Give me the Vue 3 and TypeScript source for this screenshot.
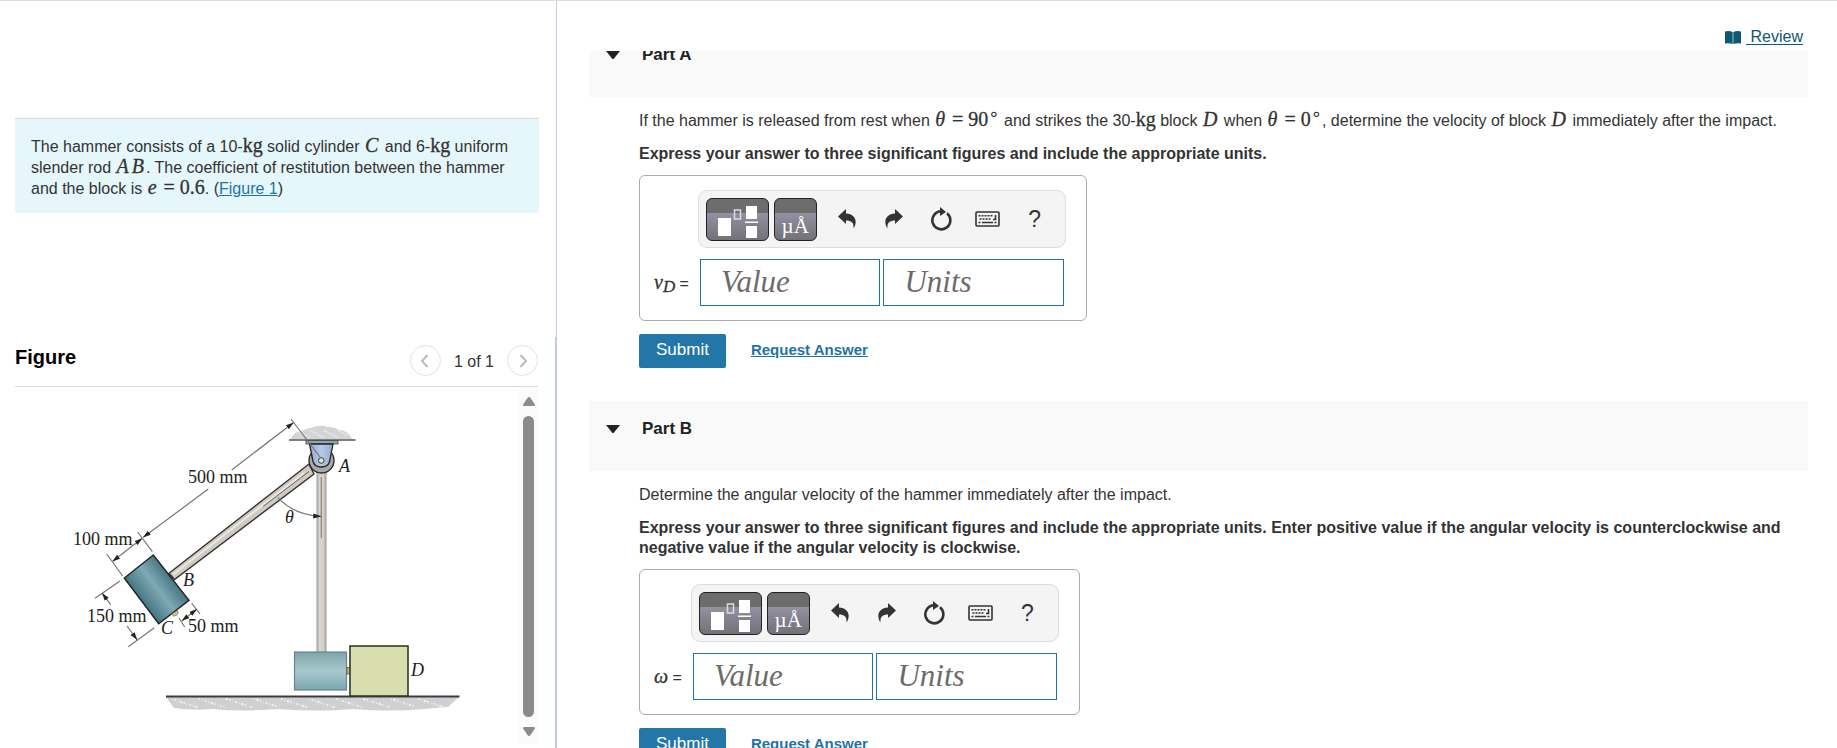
<script setup lang="ts">
import { ref } from 'vue'

type Kind = 'text' | 'rm' | 'it' | 'op' | 'deg'
interface Segment { t: string; k: Kind }
interface Part {
  id: string
  title: string
  question: Segment[]
  instruction: string
  symbol: string
  sub: string
}

const seg = (t: string, k: Kind = 'text'): Segment => ({ t, k })

const intro: Segment[] = [
  seg('The hammer consists of a 10-'), seg('kg', 'rm'), seg(' solid cylinder '), seg('C', 'it'),
  seg(' and 6-'), seg('kg', 'rm'), seg(' uniform slender rod '), seg('A', 'it'), seg('B', 'it'),
  seg('. The coefficient of restitution between the hammer and the block is '),
  seg('e', 'it'), seg('=', 'op'), seg('0.6', 'rm'), seg('. ('),
]

const parts: Part[] = [
  {
    id: 'a',
    title: 'Part A',
    question: [
      seg('If the hammer is released from rest when '), seg('θ', 'it'), seg('=', 'op'), seg('90', 'rm'), seg('∘', 'deg'),
      seg(' and strikes the 30-'), seg('kg', 'rm'), seg(' block '), seg('D', 'it'), seg(' when '),
      seg('θ', 'it'), seg('=', 'op'), seg('0', 'rm'), seg('∘', 'deg'),
      seg(', determine the velocity of block '), seg('D', 'it'), seg(' immediately after the impact.'),
    ],
    instruction: 'Express your answer to three significant figures and include the appropriate units.',
    symbol: 'v',
    sub: 'D',
  },
  {
    id: 'b',
    title: 'Part B',
    question: [seg('Determine the angular velocity of the hammer immediately after the impact.')],
    instruction: 'Express your answer to three significant figures and include the appropriate units. Enter positive value if the angular velocity is counterclockwise and negative value if the angular velocity is clockwise.',
    symbol: 'ω',
    sub: '',
  },
]

const open = ref<Record<string, boolean>>({ a: true, b: true })

const groundDots = Array.from({ length: 90 }, (_, i) => ({
  x: 172 + i * 3.05,
  y: 699 + ((i * 37) % 9),
  r: 0.6 + ((i * 13) % 5) * 0.15,
}))
const ceilingDots = Array.from({ length: 26 }, (_, i) => ({
  x: 297 + i * 2,
  y: 431 + ((i * 29) % 7),
}))
</script>

<template>
  <div class="page">
    <aside class="side">
      <section class="intro">
        <p><span v-for="(s, i) in intro" :key="i" :class="s.k">{{ s.t }}</span><a href="#figure">Figure 1</a>)</p>
      </section>

      <section id="figure" class="figure">
        <header class="figure-head">
          <h2>Figure</h2>
          <nav class="pager">
            <button type="button" aria-label="Previous figure">
              <svg width="10" height="14" viewBox="0 0 10 14"><path d="M7.500 1 2 7l5.500 6" /></svg>
            </button>
            <span>1 of 1</span>
            <button type="button" aria-label="Next figure">
              <svg width="10" height="14" viewBox="0 0 10 14"><path d="M2.500 1 8 7l-5.500 6" /></svg>
            </button>
          </nav>
        </header>
        <div class="figure-body">
          <svg class="diagram" viewBox="15 387 504 357" role="img" aria-label="Hammer and block">
            <defs>
              <linearGradient id="cyl" gradientUnits="userSpaceOnUse" x1="139" y1="602" x2="172" y2="577">
                <stop offset="0" stop-color="#3d6e7c" /><stop offset=".55" stop-color="#7fa9b4" /><stop offset="1" stop-color="#45757f" />
              </linearGradient>
              <linearGradient id="cyl2" x1="0" y1="0" x2="0" y2="1">
                <stop offset="0" stop-color="#7fa3ab" /><stop offset=".5" stop-color="#a9c9ce" /><stop offset="1" stop-color="#7ba4ad" />
              </linearGradient>
              <linearGradient id="rod" x1="0" y1="0" x2="1" y2="0">
                <stop offset="0" stop-color="#9a9a9a" /><stop offset=".3" stop-color="#d8d5cf" /><stop offset=".7" stop-color="#d5cfc6" /><stop offset="1" stop-color="#999" />
              </linearGradient>
              <linearGradient id="bracket" x1="0" y1="0" x2="1" y2="0">
                <stop offset="0" stop-color="#8fa9d3" /><stop offset=".5" stop-color="#b9cae6" /><stop offset="1" stop-color="#91a9cf" />
              </linearGradient>
              <marker id="tip" viewBox="0 0 8 6" refX="7.500" refY="3" markerWidth="8" markerHeight="6" markerUnits="userSpaceOnUse" orient="auto-start-reverse">
                <path d="M0 .5 8 3 0 5.500z" fill="#222" />
              </marker>
            </defs>

            <path d="M291 439q3-8 11-8 4-3 9-3 8-4 17-1 7 0 11 3 9 0 13 9z" fill="#d3d4d6" />
            <circle v-for="(d, i) in ceilingDots" :key="'c' + i" :cx="d.x" :cy="d.y" r=".8" fill="#f1f1f1" />
            <path d="M289 440h66.500" stroke="#555" stroke-width="1.600" />

            <rect x="316.500" y="470" width="10" height="182" fill="url(#rod)" />
            <path d="M321.300 477v61" stroke="#8c7f73" stroke-width="1.200" />

            <path d="M169 573.300 309 464l5 10-139.500 105.500z" fill="#cfcac2" stroke="#333" stroke-width="1.400" />
            <path d="M173 574.500 304 473" stroke="#eae7e2" stroke-width="2" />
            <path d="M263 506.500 309 471.500" stroke="#6d665e" stroke-width="1" />

            <circle cx="321.500" cy="460.500" r="12.500" fill="#aaa8a6" stroke="#222" stroke-width="1.300" />
            <rect x="306" y="440.500" width="32" height="3.500" fill="#8fa7ab" stroke="#444" stroke-width=".8" />
            <path d="M309.500 444h23.500l-3.500 18q-2 5-8.200 5t-8.200-5z" fill="url(#bracket)" stroke="#222" stroke-width="1.300" />
            <path d="M291 419 320 457" class="dim" />
            <circle cx="321.300" cy="460.500" r="2.800" fill="#e4e4e4" stroke="#333" />

            <path d="M153.300 555 124.300 578 158.700 623.700 189 600.300z" fill="url(#cyl)" stroke="#222" stroke-width="1.400" />
            <path d="M171.500 614.300a3.200 3.200 0 0 0 6-3.800z" fill="#cfc87a" stroke="#777" stroke-width=".8" />

            <rect x="294.500" y="652" width="52" height="38" fill="url(#cyl2)" stroke="#68868d" stroke-width="1.200" />
            <rect x="347" y="667.500" width="3.500" height="6.500" fill="#c3bf75" stroke="#555" stroke-width=".8" />

            <path d="M166 697h293l-11 10q-14 1-24 2-36 3-70 0-38 3-76 0-35 3-66 0-20 2-38-1z" fill="#cfd0d4" />
            <circle v-for="(d, i) in groundDots" :key="'g' + i" :cx="d.x" :cy="d.y" :r="d.r" fill="#f2f2f2" />
            <path d="M166 696.500h293.500" stroke="#3c3c3c" stroke-width="1.800" />
            <rect x="350" y="646" width="58" height="50" fill="#d8deae" stroke="#333a25" stroke-width="1.600" />

            <g class="dim">
              <path d="M231.700 470 293.300 422.700" marker-end="url(#tip)" />
              <path d="M208.300 489 143.300 537.300" marker-end="url(#tip)" />
              <path d="M142 538.500 112.700 561.300" marker-start="url(#tip)" marker-end="url(#tip)" />
              <path d="M106.700 554 122.700 576M137.700 532 152.300 551.700M95 598.300 120 581M128.300 646.700 154.300 627.700" />
              <path d="M110.700 604.700 102.300 593.300" marker-end="url(#tip)" />
              <path d="M127 626 137 639.700" marker-end="url(#tip)" />
              <path d="M179 618 184.700 627M191.700 603.300 200 614" />
              <path d="M182 620.700 196.700 609.300" marker-start="url(#tip)" marker-end="url(#tip)" />
              <path d="M278 497.700Q294 515 320.700 516.300" marker-end="url(#tip)" />
            </g>

            <g class="tag">
              <text x="188" y="483">500 mm</text>
              <text x="73" y="545">100 mm</text>
              <text x="87" y="622">150 mm</text>
              <text x="188" y="632">50 mm</text>
            </g>
            <g class="tag name">
              <text x="339" y="472">A</text>
              <text x="183" y="586">B</text>
              <text x="161" y="634">C</text>
              <text x="411" y="676">D</text>
              <text x="285" y="523">θ</text>
            </g>
          </svg>
          <div class="scroll" aria-hidden="true">
            <svg width="12" height="9" viewBox="0 0 12 9"><path d="M6 0q1 0 1.500 1L12 7.500Q12 9 11 9H1Q0 9 0 7.500L4.500 1Q5 0 6 0z" /></svg>
            <div class="thumb"></div>
            <svg width="12" height="9" viewBox="0 0 12 9"><path d="M6 9q1 0 1.500-1L12 1.500Q12 0 11 0H1Q0 0 0 1.500L4.500 8Q5 9 6 9z" /></svg>
          </div>
        </div>
      </section>
    </aside>

    <main class="main">
      <div class="topbar">
        <a class="review" href="#review">
          <svg width="16" height="13" viewBox="0 0 16 13"><path d="M0 .5Q4-.5 7.700 1v12Q4 11.800 0 12.500zM16 .5Q12-.5 8.300 1v12q3.700-1.200 7.700-.5z" /></svg><span>&nbsp;Review</span>
        </a>
      </div>
      <div class="viewport">
        <div class="parts">
          <section v-for="p in parts" :key="p.id" class="part">
            <header class="part-head">
              <button type="button" :aria-expanded="open[p.id]" :aria-label="'Toggle ' + p.title" @click="open[p.id] = !open[p.id]">
                <svg width="14" height="8" viewBox="0 0 14 8"><path d="M0 0h14L8 7.500q-1 1-2 0z" /></svg>
              </button>
              <h2>{{ p.title }}</h2>
            </header>
            <div v-if="open[p.id]" class="part-body">
              <p class="question"><span v-for="(s, i) in p.question" :key="i" :class="s.k">{{ s.t }}</span></p>
              <p class="instruction">{{ p.instruction }}</p>
              <form class="answer" @submit.prevent>
                <div class="box">
                  <label :for="'value-' + p.id"><i>{{ p.symbol }}<sub v-if="p.sub">{{ p.sub }}</sub></i> =</label>
                  <div class="entry">
                    <div class="tools">
                      <button type="button" class="dark wide" aria-label="Templates">
                        <svg width="40" height="33" viewBox="0 0 40 33">
                          <path d="M0 12h13v18H0zM28 0h11v13H28zM28 20h11v12H28zM27 15.500h13v1.500H27z" fill="#fff" />
                          <path d="M16.500 4h6v9h-6z" fill="none" stroke="#ddd" stroke-width="1.500" />
                        </svg>
                      </button>
                      <button type="button" class="dark" aria-label="Units symbols">µÅ</button>
                      <button type="button" class="tool" aria-label="Undo">
                        <svg width="18" height="20" viewBox="0 0 18 20"><path d="M0 7.500 8 0v4.500c7 .3 10.500 5 9.500 10-.3 2-1 3.700-2 5 .6-5-1.500-8-7.500-8V15z" /></svg>
                      </button>
                      <button type="button" class="tool" aria-label="Redo">
                        <svg width="18" height="20" viewBox="0 0 18 20"><path d="M18 7.500 10 0v4.500C3 4.800-.5 9.500.5 14.500c.3 2 1 3.700 2 5-.6-5 1.500-8 7.500-8V15z" /></svg>
                      </button>
                      <button type="button" class="tool" aria-label="Reset">
                        <svg width="22" height="24" viewBox="0 0 22 24"><path d="M17 6.300A9 9 0 1 1 11 4.300" fill="none" stroke="#333" stroke-width="2.600" /><path d="M10 0 16 5l-6 4z" /></svg>
                      </button>
                      <button type="button" class="tool" aria-label="Keyboard shortcuts">
                        <svg width="25" height="16" viewBox="0 0 25 16">
                          <rect x="1" y="1" width="23" height="14" rx="1" fill="none" stroke="#333" stroke-width="1.600" />
                          <path d="M3.500 4.800h14M4.500 8h12M3.500 11.500h2M19.500 11.500h2" fill="none" stroke="#333" stroke-width="1.600" stroke-dasharray="2 1" />
                          <path d="M7 11.500h11M20.500 4v4.500H18" fill="none" stroke="#333" stroke-width="1.600" />
                        </svg>
                      </button>
                      <button type="button" class="tool help" aria-label="Help">?</button>
                    </div>
                    <div class="fields">
                      <input :id="'value-' + p.id" type="text" placeholder="Value" />
                      <input type="text" placeholder="Units" aria-label="Units" />
                    </div>
                  </div>
                </div>
                <div class="actions">
                  <button type="submit" class="submit">Submit</button>
                  <a href="#request">Request Answer</a>
                </div>
              </form>
            </div>
          </section>
        </div>
      </div>
    </main>
  </div>
</template>

<style>
body { margin: 0; background: #fff; }
</style>

<style scoped>
* { box-sizing: border-box; }
.page {
  display: flex;
  height: 100vh;
  overflow: hidden;
  border-top: 1px solid #dcdcdc;
  color: #333;
  font: 16px/20px "Liberation Sans", Arial, sans-serif;
}
h2, p { margin: 0; }
button { font-family: inherit; padding: 0; cursor: pointer; }
a { color: #1f74a6; }

.side {
  flex: 0 0 30.3%;
  display: flex;
  flex-direction: column;
  border-right: 1px solid #c3cce0;
  padding-left: 15px;
}
.intro {
  margin: 117px 17px 0 0;
  padding: 17px 16px 14px;
  border-top: 1px solid #dadada;
  background: #e5f7fa;
  line-height: 21px;
}
.rm, .it, .op, .deg {
  font-family: "Liberation Serif", "Times New Roman", serif;
  font-size: 20px;
  line-height: 0;
  -webkit-text-stroke: 0.3px #333;
}
.it { font-style: italic; padding: 0 2px 0 1px; }
.op { padding: 0 5px; }
.deg { font-size: 18px; vertical-align: 6px; font-family: "DejaVu Sans", sans-serif; -webkit-text-stroke: 0; }

.figure {
  flex: 1;
  min-height: 0;
  display: flex;
  flex-direction: column;
  margin-top: 124px;
  padding-right: 17px;
  border-right: 1px solid #b9c7e4;
}
.figure-head {
  display: flex;
  justify-content: space-between;
  height: 50px;
  padding-top: 8px;
  border-bottom: 1px solid #dadada;
}
.figure-head h2 { font-size: 20px; line-height: 24px; color: #000; }
.pager { display: flex; align-items: flex-start; gap: 13px; }
.pager span { padding-top: 7px; line-height: 20px; }
.pager button {
  width: 31px;
  height: 31px;
  display: grid;
  place-items: center;
  border: 1px solid #e3e3e3;
  border-radius: 50%;
  background: #fff;
}
.pager path { fill: none; stroke: #bbb; stroke-width: 2; }
.figure-body { flex: 1; min-height: 0; display: flex; padding-bottom: 4px; }
.diagram { flex: 1; min-width: 0; height: 357px; }
.dim { fill: none; stroke: #777; stroke-width: 1.2; }
.tag { font: 18px "Liberation Serif", "Times New Roman", serif; fill: #222; }
.name { font-style: italic; }
.scroll {
  width: 19px;
  display: flex;
  flex-direction: column;
  align-items: center;
  gap: 10px;
  padding: 10px 0 8px;
  background: #fbfbfb;
}
.scroll svg { fill: #8b8b8b; }
.thumb { flex: 1; width: 11px; border-radius: 6px; background: #8b8b8b; }

.main { flex: 1; min-width: 0; display: flex; flex-direction: column; padding: 0 29px 0 32px; }
.topbar { flex: 0 0 50px; display: flex; justify-content: flex-end; align-items: flex-start; padding: 26px 5px 0 0; }
.review { display: flex; align-items: center; gap: 5px; color: #0c5875; text-decoration: none; }
.review svg { fill: #0c5875; }
.review span { text-decoration: underline; text-underline-offset: 2px; }
.viewport { flex: 1; min-height: 0; overflow: hidden; }
.parts { display: flex; flex-direction: column; gap: 33px; margin-top: -24px; }
.part-head { display: flex; gap: 22px; height: 70px; padding: 18px 17px 0; background: #f9f9f9; }
.part-head h2 { font-size: 17px; line-height: 20px; color: #222; }
.part-head button { width: 14px; height: 20px; border: 0; background: none; }
.part-head svg { display: block; fill: #222; }
.part-body { padding: 14px 0 0 50px; }
.instruction { margin-top: 13px; font-weight: bold; }
.answer { margin-top: 11px; }
.box {
  display: flex;
  align-items: flex-end;
  gap: 9px;
  width: fit-content;
  padding: 14px 20px 14px 14px;
  border: 1px solid #aaa;
  border-radius: 6px;
}
.box label { height: 34px; line-height: 20px; white-space: nowrap; }
.box i { font: italic 20px/20px "Liberation Serif", "Times New Roman", serif; -webkit-text-stroke: 0.3px #333; }
.box sub { font-size: 17px; line-height: 0; vertical-align: -3px; }
.entry { width: 368px; }
.tools {
  display: flex;
  align-items: center;
  height: 58px;
  padding: 0 7px;
  border: 1px solid #ddd;
  border-radius: 9px;
  background: #f4f4f4;
}
.dark {
  width: 43px;
  height: 43px;
  margin-right: 5px;
  padding-top: 14px;
  border: 1px solid #222;
  border-radius: 6px;
  background: linear-gradient(#6d6d6d 0 34%, #9390a0 35%, #737178);
  color: #fff;
  font: 21px/24px "Liberation Serif", "Times New Roman", serif;
}
.dark.wide { width: 63px; padding: 1px 0 0 2px; }
.dark svg { display: block; margin: 6px auto 0; }
.tool { width: 47px; height: 43px; display: grid; place-items: center; border: 0; background: none; color: #333; }
.tool svg { fill: #333; }
.tool.help { font-size: 23px; }
.tool:nth-of-type(3) { margin-left: 2px; }
.fields { display: flex; gap: 3px; padding: 11px 2px 0; }
.fields input {
  flex: 1;
  min-width: 0;
  height: 47px;
  padding: 0 20px 2px;
  border: 1px solid #1f74a6;
  background: #fff;
  font: italic 31px "Liberation Serif", "Times New Roman", serif;
}
.fields input::placeholder { color: #6c6c6c; opacity: 1; }
.actions { display: flex; align-items: center; gap: 25px; margin-top: 13px; }
.submit { height: 34px; padding: 0 17px 2px; border: 0; border-radius: 2px; background: #2377a8; color: #fff; font-size: 17px; }
.actions a { font-size: 15px; font-weight: bold; line-height: 20px; padding-bottom: 2px; }
</style>
